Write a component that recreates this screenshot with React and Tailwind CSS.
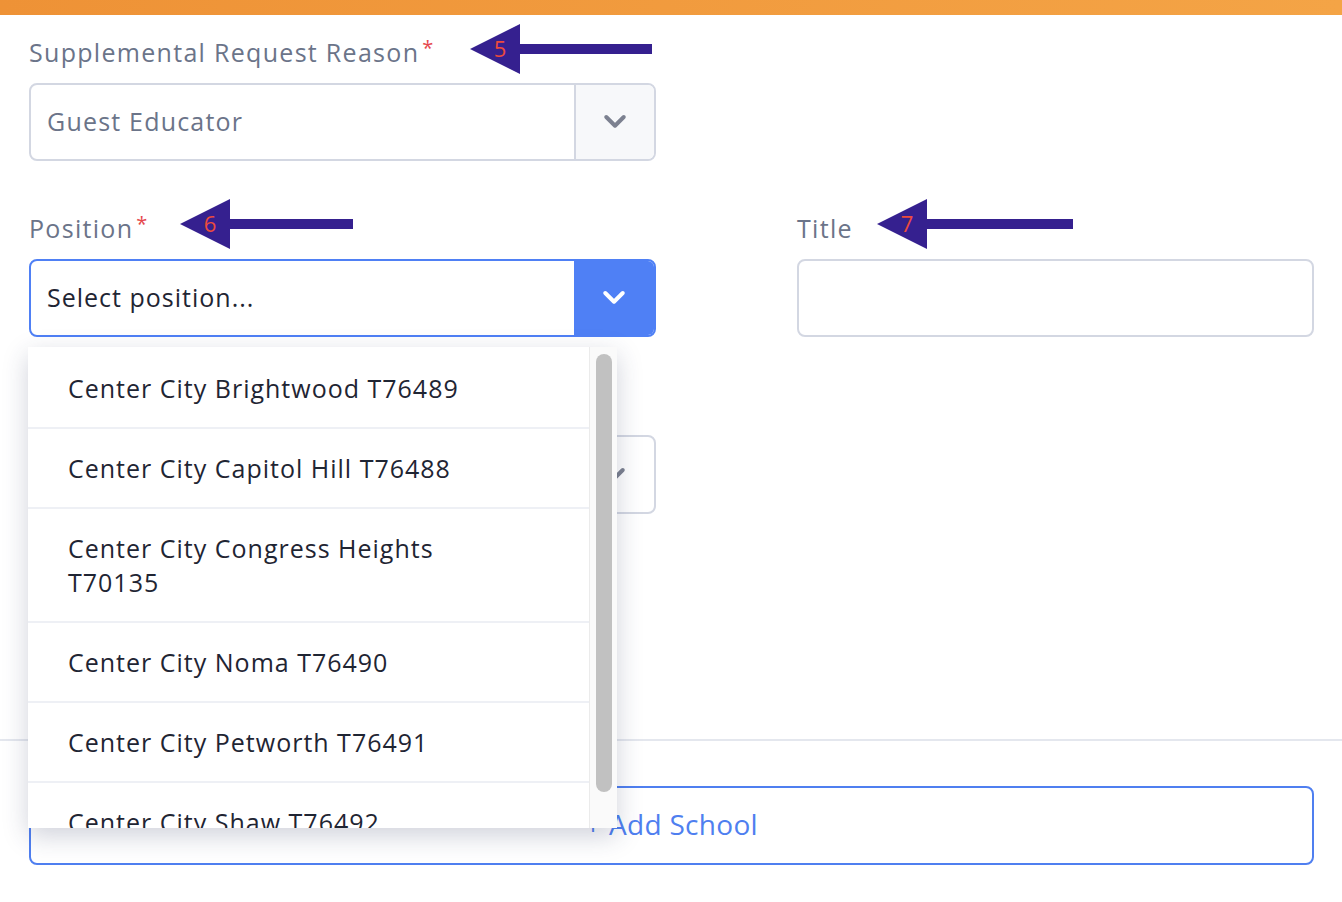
import { ChevronDown } from 'lucide-react'

const positions = [
  'Center City Brightwood T76489',
  'Center City Capitol Hill T76488',
  'Center City Congress Heights T70135',
  'Center City Noma T76490',
  'Center City Petworth T76491',
  'Center City Shaw T76492',
]

const Label = ({ children, required }) => (
  <div className="h-8 leading-8 text-[25px] tracking-[1.3px] text-[#6b7489] flex items-start">
    <span>{children}</span>
    {required && <span className="text-[#e5484d] text-[20px] ml-[3px] leading-6">*</span>}
  </div>
)

const Chevron = ({ className }) => (
  <svg viewBox="0 0 24 24" className={className} fill="none" stroke="currentColor" strokeWidth="3.2" strokeLinecap="round" strokeLinejoin="round">
    <polyline points="5,8 12,15 19,8" />
  </svg>
)

const Arrow = ({ x, y, len, num }) => (
  <g>
    <polygon points={`${x},${y} ${x + 50},${y - 25} ${x + 50},${y + 25}`} fill="#35208f" />
    <rect x={x + 48} y={y - 5} width={len} height={10} fill="#35208f" />
    <text x={x + 30} y={y + 8} fontSize="22" fill="#ec4b3c" textAnchor="middle" fontFamily="'Open Sans', sans-serif">{num}</text>
  </g>
)

export default function App() {
  return (
    <div className="relative w-[1342px] h-[902px] overflow-hidden bg-white font-['Open_Sans','Liberation_Sans',sans-serif]">
      <div className="h-[15px] bg-gradient-to-r from-[#ee9236] to-[#f4a446]" />

      <div className="pl-[29px] pr-[28px] pt-[21px]">
        <div className="grid grid-cols-[627px_1fr] gap-x-[141px]">
          {/* Supplemental Request Reason */}
          <div>
            <Label required>Supplemental Request Reason</Label>
            <div className="mt-[15px] h-[78px] flex rounded-lg border-2 border-[#d3d7e2] overflow-hidden">
              <div className="flex-1 flex items-center pl-4 text-[25px] tracking-[1.2px] text-[#6b7489]">Guest Educator</div>
              <div className="w-[80px] flex items-center justify-center bg-[#f7f8fa] border-l-2 border-[#d3d7e2] text-[#7c8190]">
                <Chevron className="w-[30px] h-[30px]" />
              </div>
            </div>
          </div>
          <div />

          {/* Position */}
          <div className="mt-[51px]">
            <Label required>Position</Label>
            <div className="mt-[15px] h-[78px] flex rounded-lg border-2 border-[#4f80f5] overflow-hidden">
              <div className="flex-1 flex items-center pl-4 text-[25px] tracking-[1px] text-[#1f2533]">Select position...</div>
              <div className="w-[80px] flex items-center justify-center bg-[#4f80f5] text-white">
                <Chevron className="w-[30px] h-[30px]" />
              </div>
            </div>
          </div>

          {/* Title */}
          <div className="mt-[51px]">
            <Label>Title</Label>
            <div className="mt-[15px] h-[78px] rounded-lg border-2 border-[#d3d7e2]" />
          </div>

          {/* field covered by the open menu */}
          <div className="mt-[51px]">
            <div className="h-8" />
            <div className="mt-[15px] h-[79px] flex rounded-lg border-2 border-[#d3d7e2] overflow-hidden">
              <div className="flex-1" />
              <div className="w-[80px] flex items-center justify-center text-[#7c8190]">
                <Chevron className="w-[30px] h-[30px]" />
              </div>
            </div>
          </div>
          <div />
        </div>
      </div>

      <div className="mt-[225px] h-[2px] bg-[#e4e7ee]" />

      <div className="pl-[29px] pr-[28px] mt-[45px]">
        <button className="w-full h-[79px] rounded-lg border-2 border-[#4f7ff0] text-[#4f7ff0] text-[28px] tracking-[0.3px] flex items-center justify-center pb-[4px]">
          + Add School
        </button>
      </div>

      {/* dropdown menu */}
      <div className="absolute left-[28px] top-[347px] w-[589px] h-[481px] bg-white shadow-[0_8px_24px_rgba(40,50,90,0.22)] flex overflow-hidden">
        <div className="flex-1 overflow-hidden pt-[2px]">
          {positions.map((p) => (
            <div key={p} className="pl-10 py-[22px] border-b-2 border-[#eef0f5] text-[25px] leading-[34px] tracking-[1px] text-[#1f2533]">
              <div className="w-[420px]">{p}</div>
            </div>
          ))}
        </div>
        <div className="w-[28px] bg-[#fafafa] border-l border-[#ebebeb] pt-[7px] pl-[6px]">
          <div className="w-[16px] h-[438px] rounded-full bg-[#c1c1c1]" />
        </div>
      </div>

      {/* annotation arrows */}
      <svg className="absolute inset-0 pointer-events-none" width="1342" height="902">
        <Arrow x={470} y={49} len={134} num="5" />
        <Arrow x={180} y={224} len={125} num="6" />
        <Arrow x={877} y={224} len={148} num="7" />
      </svg>
    </div>
  )
}
